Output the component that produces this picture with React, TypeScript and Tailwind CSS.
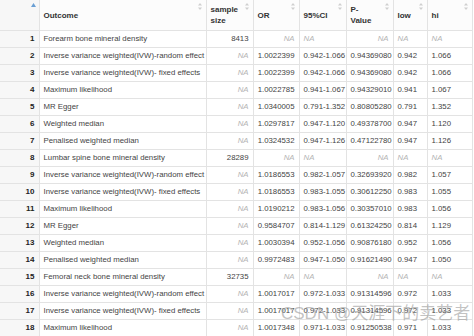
// 数据查看器表格
type Row = [string, string, string, string, string, string, string];

const NA = 'NA';

const rows: Row[] = [
  ['Forearm bone mineral density', '8413', NA, NA, NA, NA, NA],
  ['Inverse variance weighted(IVW)-random effect', NA, '1.0022399', '0.942-1.066', '0.94369080', '0.942', '1.066'],
  ['Inverse variance weighted(IVW)- fixed effects', NA, '1.0022399', '0.942-1.066', '0.94369080', '0.942', '1.066'],
  ['Maximum likelihood', NA, '1.0022785', '0.941-1.067', '0.94329010', '0.941', '1.067'],
  ['MR Egger', NA, '1.0340005', '0.791-1.352', '0.80805280', '0.791', '1.352'],
  ['Weighted median', NA, '1.0297817', '0.947-1.120', '0.49378700', '0.947', '1.120'],
  ['Penalised weighted median', NA, '1.0324532', '0.947-1.126', '0.47122780', '0.947', '1.126'],
  ['Lumbar spine bone mineral density', '28289', NA, NA, NA, NA, NA],
  ['Inverse variance weighted(IVW)-random effect', NA, '1.0186553', '0.982-1.057', '0.32693920', '0.982', '1.057'],
  ['Inverse variance weighted(IVW)- fixed effects', NA, '1.0186553', '0.983-1.055', '0.30612250', '0.983', '1.055'],
  ['Maximum likelihood', NA, '1.0190212', '0.983-1.056', '0.30357010', '0.983', '1.056'],
  ['MR Egger', NA, '0.9584707', '0.814-1.129', '0.61324250', '0.814', '1.129'],
  ['Weighted median', NA, '1.0030394', '0.952-1.056', '0.90876180', '0.952', '1.056'],
  ['Penalised weighted median', NA, '0.9972483', '0.947-1.050', '0.91621490', '0.947', '1.050'],
  ['Femoral neck bone mineral density', '32735', NA, NA, NA, NA, NA],
  ['Inverse variance weighted(IVW)-random effect', NA, '1.0017017', '0.972-1.033', '0.91314596', '0.972', '1.033'],
  ['Inverse variance weighted(IVW)- fixed effects', NA, '1.0017017', '0.972-1.033', '0.91314596', '0.972', '1.033'],
  ['Maximum likelihood', NA, '1.0017348', '0.971-1.033', '0.91250538', '0.971', '1.033'],
];

// 数值列右对齐
const numeric = [false, true, true, false, true, false, false];

function SortIcon() {
  return (
    <svg width="4" height="7" viewBox="0 0 4 7" className="absolute right-[4px] top-[3px]">
      <path d="M2 0 L4 2.5 L0 2.5 Z" fill="#d0d0d0" />
      <path d="M2 7 L4 4.5 L0 4.5 Z" fill="#d0d0d0" />
    </svg>
  );
}

function Head({ children }: { children: React.ReactNode }) {
  return (
    <th className="relative border border-[#e3e3e3] border-t-0 text-left pl-[4px] pt-[1px]">
      {children}
      <SortIcon />
    </th>
  );
}

export default function App() {
  return (
    <div
      className="relative w-[474px] h-[336px] overflow-hidden bg-white text-[#333]"
      style={{ fontFamily: '"Liberation Sans", Arial, sans-serif' }}
    >
      <table className="table-fixed border-collapse w-[472px] text-[7.8px]">
        <colgroup>
          <col className="w-[39px]" />
          <col className="w-[167px]" />
          <col className="w-[47px]" />
          <col className="w-[46px]" />
          <col className="w-[47px]" />
          <col className="w-[47px]" />
          <col className="w-[34px]" />
          <col className="w-[45px]" />
        </colgroup>
        <thead>
          <tr className="h-[30px] bg-[#fcfcfc] text-[8px] font-bold text-[#333] leading-[11px]">
            <th className="relative border border-[#e3e3e3] border-l-0 border-t-0 bg-[#f7f7f7]">
              <svg width="5" height="4" viewBox="0 0 5 4" className="absolute left-[31px] top-[3px]">
                <path d="M2.5 0 L5 4 L0 4 Z" fill="#6a9fd4" />
              </svg>
            </th>
            <Head>Outcome</Head>
            <Head>
              sample
              <br />
              size
            </Head>
            <Head>OR</Head>
            <Head>95%CI</Head>
            <Head>
              P-
              <br />
              Value
            </Head>
            <Head>low</Head>
            <Head>hi</Head>
          </tr>
        </thead>
        <tbody>
          {rows.map((row, i) => (
            <tr key={i} className="h-[17px]">
              <td className="border border-[#e3e3e3] border-l-0 bg-[#f7f7f7] text-right pr-[4px] font-bold text-[8px] text-[#222]">
                {i + 1}
              </td>
              {row.map((cell, j) => (
                <td
                  key={j}
                  className={`border border-[#e3e3e3] whitespace-nowrap overflow-hidden px-[4px] ${
                    numeric[j] ? 'text-right' : 'text-left'
                  } ${cell === NA ? 'italic text-[#b5b5b5]' : 'text-[#444]'}`}
                >
                  {cell}
                </td>
              ))}
            </tr>
          ))}
        </tbody>
      </table>

      {/* 水印 */}
      <div
        className="absolute left-[281px] top-[302px] text-[17px] leading-[24px] text-[#9a9a9a]/60 whitespace-nowrap"
        style={{ fontFamily: '"Liberation Sans", "Noto Sans CJK SC", sans-serif' }}
      >
        CSDN @天涯下的卖艺者
      </div>
    </div>
  );
}
